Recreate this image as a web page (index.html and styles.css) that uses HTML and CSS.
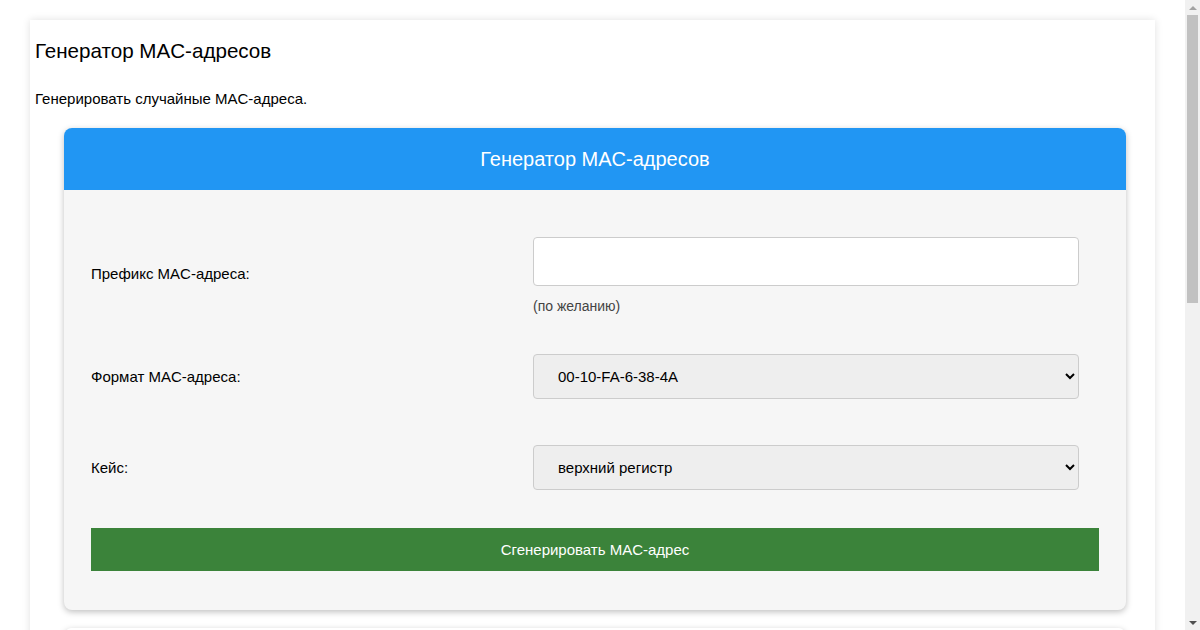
FILE: index.html
```html
<!DOCTYPE html>
<html lang="ru">
<head>
<meta charset="utf-8">
<title>Генератор MAC-адресов</title>
<link rel="stylesheet" href="styles.css">
</head>
<body>
<div class="page">
  <h1 class="title">Генератор MAC-адресов</h1>
  <p class="intro">Генерировать случайные MAC-адреса.</p>

  <div class="card">
    <div class="card-head">Генератор MAC-адресов</div>
    <div class="card-body">
      <div class="row row-prefix">
        <label class="label" for="prefix">Префикс MAC-адреса:</label>
        <div class="field">
          <input id="prefix" class="input" type="text">
          <div class="hint">(по желанию)</div>
        </div>
      </div>
      <div class="row row-format">
        <label class="label" for="format">Формат MAC-адреса:</label>
        <div class="field">
          <select id="format" class="select">
            <option>00-10-FA-6-38-4A</option>
            <option>00:10:FA:6:38:4A</option>
            <option>0010.FA06.384A</option>
            <option>0010FA06384A</option>
          </select>
        </div>
      </div>
      <div class="row row-case">
        <label class="label" for="case">Кейс:</label>
        <div class="field">
          <select id="case" class="select">
            <option>верхний регистр</option>
            <option>нижний регистр</option>
          </select>
        </div>
      </div>
      <button class="btn" type="button">Сгенерировать MAC-адрес</button>
    </div>
  </div>

  <div class="card card-result">
    <div class="result-body"></div>
  </div>
</div>

<div class="scrollbar" aria-hidden="true">
  <div class="sb-arrow sb-up"></div>
  <div class="sb-track"><div class="sb-thumb"></div></div>
  <div class="sb-arrow sb-down"></div>
</div>
</body>
</html>
```
FILE: styles.css
```css
html, body {
  margin: 0;
  padding: 0;
  background: #ffffff;
}

body {
  font-family: "Liberation Sans", Arial, sans-serif;
  color: #000;
}

.page {
  width: 1125px;
  margin: 20px 0 20px 30px;
  padding: 5px 5px 30px;
  box-sizing: border-box;
  background: #fff;
  box-shadow: 0 0 8px rgba(0, 0, 0, 0.12);
}

.title {
  font-size: 20.6px;
  font-weight: normal;
  line-height: 25px;
  margin: 13px 0 0;
}

.intro {
  font-size: 15px;
  line-height: 17px;
  margin: 27px 0 0;
}

.card {
  width: 1062px;
  margin: 21px 0 0 29px;
  background: #f6f6f6;
  border-radius: 8px;
  box-shadow: 0 2px 6px rgba(0, 0, 0, 0.25);
  overflow: hidden;
}

.card-head {
  height: 62px;
  background: #2196f3;
  color: #fff;
  font-size: 20px;
  display: flex;
  align-items: center;
  justify-content: center;
}

.card-body {
  padding: 47px 27px 39px;
}

.row {
  display: grid;
  grid-template-columns: 442px 546px;
  align-items: center;
}

.row-prefix .label {
  margin-bottom: 6px;
}

.row-format {
  margin-top: 39px;
}

.row-case {
  margin-top: 46px;
}

.label {
  font-size: 15px;
}

.input {
  display: block;
  width: 100%;
  height: 49px;
  box-sizing: border-box;
  border: 1px solid #ccc;
  border-radius: 4px;
  background: #fff;
  font-family: inherit;
  font-size: 15px;
  padding: 0 20px;
}

.hint {
  margin-top: 12px;
  font-size: 14px;
  line-height: 17px;
  color: #444;
}

.select {
  display: block;
  width: 100%;
  height: 45px;
  box-sizing: border-box;
  border: 1px solid #ccc;
  border-radius: 4px;
  background-color: #eee;
  font-family: inherit;
  font-size: 15px;
  color: #000;
  padding: 0 20px;
}

.btn {
  display: block;
  width: 100%;
  height: 43px;
  margin-top: 38px;
  border: none;
  border-radius: 0;
  background: #3b833a;
  color: #fff;
  font-family: inherit;
  font-size: 15px;
}

.card-result {
  margin-top: 18px;
}

.result-body {
  height: 600px;
  background: #fff;
}

/* imitation of the browser's classic scrollbar */
.scrollbar {
  position: fixed;
  top: 0;
  right: 0;
  width: 15px;
  height: 100vh;
  background: #f1f1f1;
  display: flex;
  flex-direction: column;
}

.sb-arrow {
  height: 15px;
  display: flex;
  align-items: center;
  justify-content: center;
}

.sb-up::before,
.sb-down::before {
  content: "";
  width: 0;
  height: 0;
  border-left: 4px solid transparent;
  border-right: 4px solid transparent;
}

.sb-up::before {
  border-bottom: 4px solid #a3a3a3;
}

.sb-down::before {
  border-top: 4px solid #505050;
}

.sb-track {
  flex: 1;
  padding: 0 2px;
}

.sb-thumb {
  height: 288px;
  background: #c1c1c1;
}
```
